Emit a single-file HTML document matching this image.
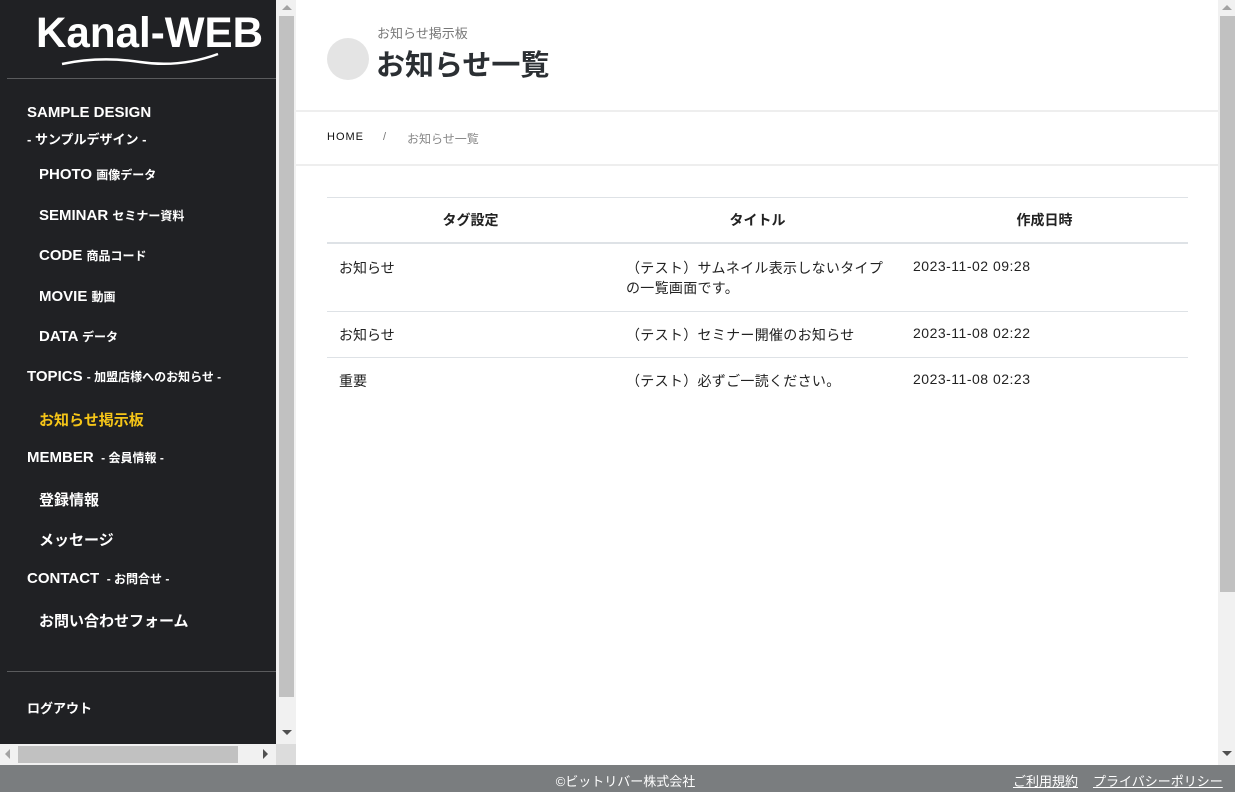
<!DOCTYPE html>
<html><head><meta charset="utf-8"><style>
*{margin:0;padding:0;box-sizing:border-box}
body{width:1235px;height:792px;overflow:hidden;position:relative;background:#fff;font-family:"Liberation Sans","Noto Sans CJK JP",sans-serif;color:#222}
.a{position:absolute;white-space:nowrap}
#side{left:0;top:0;width:276px;height:744px;background:#202124;color:#fff}
.nav{font-weight:bold;font-size:15px;color:#fff}
.nav small{font-size:12px}
.row{position:absolute;left:327px;width:861px;border-top:1px solid #dee2e6}
</style></head><body>
<div class="a" id="side">
  <div class="a" style="left:36px;top:9px;font-size:43px;letter-spacing:0px;color:#fff;font-weight:bold;transform:scaleX(0.98);transform-origin:left">Kanal-WEB</div>
  <svg class="a" style="left:60px;top:50px" width="160" height="18"><path d="M2 14 Q40 6 80 12 T158 4" stroke="#fff" stroke-width="2.5" fill="none"/></svg>
  <div class="a" style="left:7px;top:78px;width:269px;height:1px;background:#5a5b5d"></div>
  <div class="a nav" style="left:27px;top:104px;font-size:15px">SAMPLE DESIGN</div>
  <div class="a nav" style="left:27px;top:129px;font-size:13px">- サンプルデザイン -</div>
  <div class="a nav" style="left:39px;top:166px">PHOTO <small>画像データ</small></div>
  <div class="a nav" style="left:39px;top:207px">SEMINAR <small>セミナー資料</small></div>
  <div class="a nav" style="left:39px;top:247px">CODE <small>商品コード</small></div>
  <div class="a nav" style="left:39px;top:288px">MOVIE <small>動画</small></div>
  <div class="a nav" style="left:39px;top:328px">DATA <small>データ</small></div>
  <div class="a nav" style="left:27px;top:368px">TOPICS <small>- 加盟店様へのお知らせ -</small></div>
  <div class="a nav" style="left:39px;top:409px;color:#f5c518">お知らせ掲示板</div>
  <div class="a nav" style="left:27px;top:449px">MEMBER <small>&nbsp;- 会員情報 -</small></div>
  <div class="a nav" style="left:39px;top:489px">登録情報</div>
  <div class="a nav" style="left:39px;top:529px">メッセージ</div>
  <div class="a nav" style="left:27px;top:570px">CONTACT <small>&nbsp;- お問合せ -</small></div>
  <div class="a nav" style="left:39px;top:610px">お問い合わせフォーム</div>
  <div class="a" style="left:7px;top:671px;width:269px;height:1px;background:#5a5b5d"></div>
  <div class="a nav" style="left:27px;top:698px;font-size:13px">ログアウト</div>
</div>
<div class="a" style="left:276px;top:0;width:20px;height:744px;background:#f1f1f1"></div>
<div class="a" style="left:279px;top:16px;width:15px;height:681px;background:#c1c1c1"></div>
<div class="a" style="left:282px;top:5px;border:5px solid transparent;border-bottom-color:#a3a3a3;border-top:0"></div>
<div class="a" style="left:282px;top:730px;border:5px solid transparent;border-top-color:#505050;border-bottom:0"></div>
<div class="a" style="left:0;top:744px;width:276px;height:21px;background:#f1f1f1"></div>
<div class="a" style="left:18px;top:746px;width:220px;height:17px;background:#c1c1c1"></div>
<div class="a" style="left:5px;top:749px;border:5px solid transparent;border-right-color:#a3a3a3;border-left:0"></div>
<div class="a" style="left:263px;top:749px;border:5px solid transparent;border-left-color:#505050;border-right:0"></div>
<div class="a" style="left:276px;top:744px;width:20px;height:21px;background:#dcdcdc"></div>
<div class="a" style="left:1218px;top:0;width:17px;height:765px;background:#f1f1f1"></div>
<div class="a" style="left:1220px;top:16px;width:15px;height:576px;background:#c1c1c1"></div>
<div class="a" style="left:1222px;top:5px;border:5px solid transparent;border-bottom-color:#a3a3a3;border-top:0"></div>
<div class="a" style="left:1222px;top:751px;border:5px solid transparent;border-top-color:#505050;border-bottom:0"></div>
<div class="a" style="left:327px;top:38px;width:42px;height:42px;border-radius:50%;background:#e4e4e4"></div>
<div class="a" style="left:377px;top:23px;font-size:13px;color:#777">お知らせ掲示板</div>
<div class="a" style="left:376px;top:42px;font-size:29px;font-weight:bold;color:#2b2f33">お知らせ一覧</div>
<div class="a" style="left:296px;top:110px;width:922px;height:2px;background:#eee"></div>
<div class="a" style="left:327px;top:131px;font-size:11px;letter-spacing:1px;color:#111">HOME</div>
<div class="a" style="left:383px;top:131px;font-size:11px;color:#777">/</div>
<div class="a" style="left:407px;top:130px;font-size:12px;color:#888">お知らせ一覧</div>
<div class="a" style="left:296px;top:164px;width:922px;height:2px;background:#eee"></div>
<div class="row" style="top:197px;height:1px"></div>
<div class="a" style="left:327px;top:210px;width:287px;text-align:center;font-size:14px;font-weight:bold">タグ設定</div>
<div class="a" style="left:614px;top:210px;width:287px;text-align:center;font-size:14px;font-weight:bold">タイトル</div>
<div class="a" style="left:901px;top:210px;width:287px;text-align:center;font-size:14px;font-weight:bold">作成日時</div>
<div class="a" style="left:327px;top:242px;width:861px;height:2px;background:#dee2e6"></div>
<div class="a" style="left:339px;top:258px;font-size:14px">お知らせ</div>
<div class="a" style="left:626px;top:258px;font-size:14px;line-height:20px;letter-spacing:0.3px">（テスト）サムネイル表示しないタイプ<br>の一覧画面です。</div>
<div class="a" style="left:913px;top:258px;font-size:14px;letter-spacing:0.5px">2023-11-02 09:28</div>
<div class="row" style="top:311px"></div>
<div class="a" style="left:339px;top:325px;font-size:14px">お知らせ</div>
<div class="a" style="left:626px;top:325px;font-size:14px;letter-spacing:0.3px">（テスト）セミナー開催のお知らせ</div>
<div class="a" style="left:913px;top:325px;font-size:14px;letter-spacing:0.5px">2023-11-08 02:22</div>
<div class="row" style="top:357px"></div>
<div class="a" style="left:339px;top:371px;font-size:14px">重要</div>
<div class="a" style="left:626px;top:371px;font-size:14px;letter-spacing:0.3px">（テスト）必ずご一読ください。</div>
<div class="a" style="left:913px;top:371px;font-size:14px;letter-spacing:0.5px">2023-11-08 02:23</div>
<div class="a" style="left:0;top:765px;width:1235px;height:27px;background:#7a7d7f"></div>
<div class="a" style="left:0;top:771px;width:1235px;text-align:center;font-size:13px;color:#fff;padding-left:16px">©ビットリバー株式会社</div>
<div class="a" style="left:1013px;top:771px;font-size:13px;color:#fff;text-decoration:underline">ご利用規約</div>
<div class="a" style="left:1093px;top:771px;font-size:13px;color:#fff;text-decoration:underline">プライバシーポリシー</div>
</body></html>
